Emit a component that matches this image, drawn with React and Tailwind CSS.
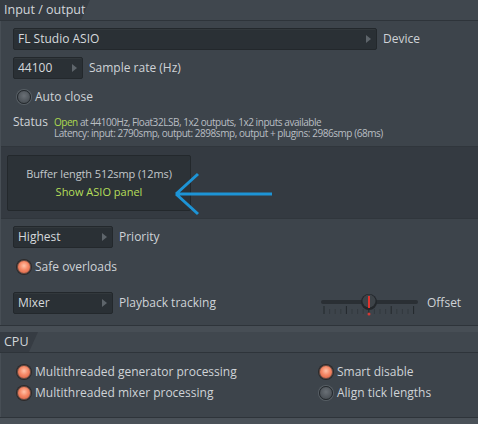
import React from "react";

const font = { fontFamily: '"Open Sans", "Noto Sans", sans-serif' };

const SectionTab = ({ title, width }) => (
  <div className="flex h-[21px] bg-[#40474e] border-b border-[#2e343a]">
    <div
      className="h-full shrink-0 bg-[#363c43] flex items-center pl-[4px] whitespace-nowrap text-[12.5px] text-[#d2d6da] [clip-path:polygon(0_0,100%_0,calc(100%-9px)_100%,0_100%)]"
      style={{ width }}
    >
      {title}
    </div>
  </div>
);

const Dropdown = ({ value, className }) => (
  <div
    className={`h-[22px] shrink-0 flex items-center justify-between pl-[4px] pr-[5px] rounded-[2px] bg-[#2a3035] border border-[#23282c] shadow-[inset_0_1px_0_rgba(255,255,255,0.04)] text-[12px] text-[#d5d9dc] ${className}`}
  >
    <span>{value}</span>
    <span className="w-0 h-0 border-y-[4px] border-y-transparent border-l-[5px] border-l-[#5e656b]" />
  </div>
);

const Radio = ({ on, label }) => (
  <div className="flex items-center gap-[4px] h-[20px]">
    <span
      className={`block shrink-0 w-[14px] h-[14px] rounded-full border-[1.5px] ${
        on
          ? "border-[#6e4a3f] bg-[radial-gradient(circle_at_50%_40%,#ffc2a8_0%,#f58866_45%,#d45c3f_100%)] shadow-[0_0_0_1px_#2d2a2a]"
          : "border-[#24292d] bg-[radial-gradient(circle_at_50%_40%,#6a7076_0%,#50565c_60%,#43484d_100%)] shadow-[0_0_0_1px_#575e64]"
      }`}
    />
    <span className="text-[12px] text-[#cfd3d7] whitespace-nowrap">{label}</span>
  </div>
);

const Slider = () => (
  <svg width="100" height="24" viewBox="0 0 100 24">
    <rect x="1" y="6" width="97" height="4" rx="2" fill="#2a2f34" />
    {[0, 1, 2, 3, 4, 5, 6, 7, 8, 9, 10, 11, 12, 13, 14, 15, 16].map((i) => {
      const x = 4 + i * 5.6;
      const major = i % 4 === 0;
      return (
        <line
          key={i}
          x1={x}
          x2={x}
          y1={major ? 12 : 15}
          y2="20"
          stroke={major ? "#23282c" : "#33393e"}
          strokeWidth="1"
        />
      );
    })}
    <circle cx="49" cy="20" r="1.5" fill="#d43a35" />
    <circle cx="49" cy="8" r="8" fill="#23272b" />
    <circle cx="49" cy="7" r="6.5" fill="#3d4348" />
    <line x1="49" y1="2" x2="49" y2="14" stroke="#e0342e" strokeWidth="2" />
  </svg>
);

export default function App() {
  return (
    <div className="w-[478px] h-[424px] bg-[#3d444b] overflow-hidden select-none" style={font}>
      <SectionTab title="Input / output" width={90} />

      <div className="h-[304px] flex flex-col border-l border-[#474e55]">
        <div className="flex items-center gap-[6px] mt-[7px] pl-[12px]">
          <Dropdown value="FL Studio ASIO" className="w-[364px]" />
          <span className="text-[12px] text-[#cfd3d7]">Device</span>
        </div>

        <div className="flex items-center gap-[6px] mt-[7px] pl-[12px]">
          <Dropdown value="44100" className="w-[70px]" />
          <span className="text-[12px] text-[#cfd3d7]">Sample rate (Hz)</span>
        </div>

        <div className="mt-[8px] pl-[16px]">
          <Radio label="Auto close" />
        </div>

        <div className="flex items-start gap-[6px] mt-[9px] pl-[12px]">
          <span className="text-[12px] leading-[12px] text-[#cfd3d7]">Status</span>
          <div className="text-[10px] leading-[10px] text-[#b9bec3] tracking-[-0.45px] whitespace-nowrap flex flex-col gap-[1px] pt-[1px]">
            <span>
              <span className="text-[#acd94f]">Open</span> at 44100Hz, Float32LSB, 1x2 outputs, 1x2 inputs available
            </span>
            <span>Latency: input: 2790smp, output: 2898smp, output + plugins: 2986smp (68ms)</span>
          </div>
        </div>

        <div className="relative h-[73px] mt-[8px] bg-[#343a41] border-y border-[#30363c] flex items-center pl-[6px]">
          <div className="w-[184px] h-[56px] bg-[#2c3237] border border-[#23282c] rounded-[2px] flex flex-col items-center justify-center gap-[4px]">
            <span className="text-[11px] leading-[14px] text-[#c3c8cc] tracking-[-0.1px]">Buffer length 512smp (12ms)</span>
            <span className="text-[11px] leading-[14px] text-[#b5df5a]">Show ASIO panel</span>
          </div>
          <svg className="absolute left-[170px] top-[24px]" width="106" height="46" viewBox="0 0 106 46">
            <path d="M5 23 H101 M5 23 L27 3 M5 23 L27 43" stroke="#1d94d6" strokeWidth="3" fill="none" />
          </svg>
        </div>

        <div className="flex items-center gap-[6px] mt-[7px] pl-[12px]">
          <Dropdown value="Highest" className="w-[100px]" />
          <span className="text-[12px] text-[#cfd3d7]">Priority</span>
        </div>

        <div className="mt-[9px] pl-[16px]">
          <Radio on label="Safe overloads" />
        </div>

        <div className="flex items-center mt-[10px] pl-[12px]">
          <Dropdown value="Mixer" className="w-[100px]" />
          <span className="w-[207px] shrink-0 text-[12px] text-[#cfd3d7] pl-[6px]">Playback tracking</span>
          <div className="mt-[7px] shrink-0">
            <Slider />
          </div>
          <span className="text-[12px] text-[#cfd3d7] ml-[7px]">Offset</span>
        </div>
      </div>

      <div className="h-[7px] bg-[#474e55] border-t border-[#2e343a]" />

      <SectionTab title="CPU" width={38} />

      <div className="h-[64px] flex pt-[9px] pl-[16px] border-l border-[#474e55]">
        <div className="w-[302px] flex flex-col gap-[1px]">
          <Radio on label="Multithreaded generator processing" />
          <Radio on label="Multithreaded mixer processing" />
        </div>
        <div className="flex flex-col gap-[1px]">
          <Radio on label="Smart disable" />
          <Radio label="Align tick lengths" />
        </div>
      </div>

      <div className="h-[10px] bg-[#4a5158] border-t border-[#2e343a]" />
    </div>
  );
}
